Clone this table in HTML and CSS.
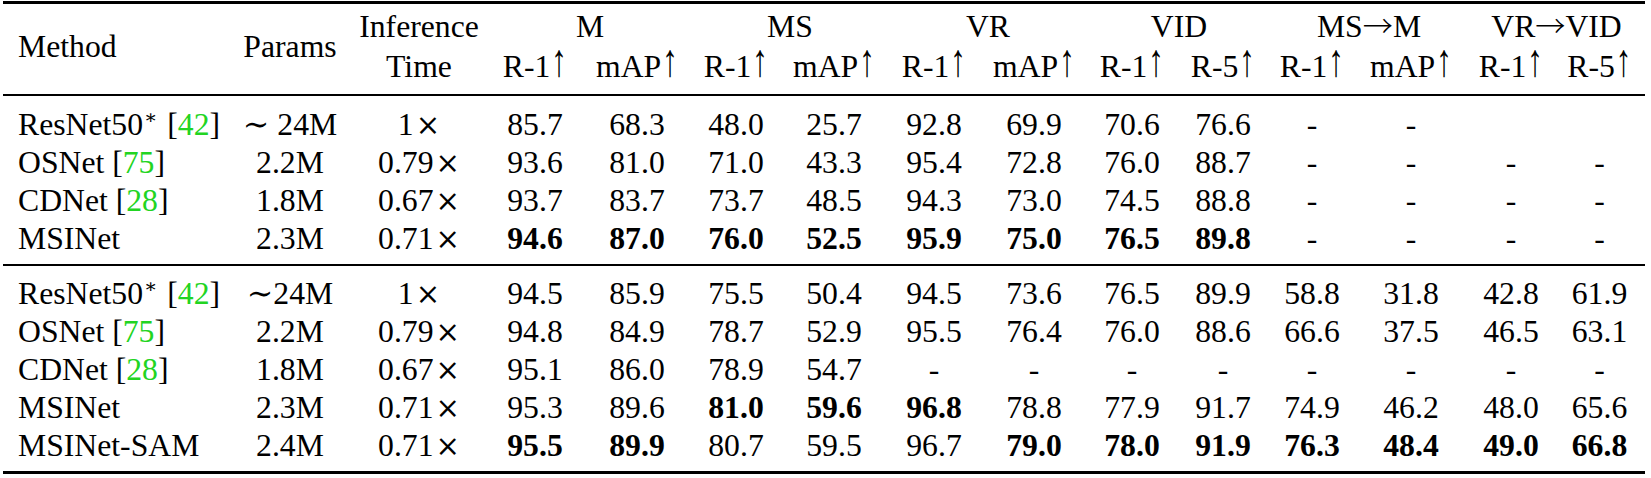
FILE: index.html
```html
<!DOCTYPE html>
<html>
<head>
<meta charset="utf-8">
<link rel="stylesheet" href="styles.css">
</head>
<body>
<div class="tbl">
  <div class="head">
    <div class="c first span2">Method</div>
    <div class="c span2">Params</div>
    <div class="c">Inference</div>
    <div class="c g2">M</div>
    <div class="c g2">MS</div>
    <div class="c g2">VR</div>
    <div class="c g2">VID</div>
    <div class="c g2">MS<span class="ra">→</span>M</div>
    <div class="c g2">VR<span class="ra">→</span>VID</div>
    <div class="c">Time</div>
    <div class="c">R-1<span class="up">↑</span></div><div class="c">mAP<span class="up">↑</span></div>
    <div class="c">R-1<span class="up">↑</span></div><div class="c">mAP<span class="up">↑</span></div>
    <div class="c">R-1<span class="up">↑</span></div><div class="c">mAP<span class="up">↑</span></div>
    <div class="c">R-1<span class="up">↑</span></div><div class="c">R-5<span class="up">↑</span></div>
    <div class="c">R-1<span class="up">↑</span></div><div class="c">mAP<span class="up">↑</span></div>
    <div class="c">R-1<span class="up">↑</span></div><div class="c">R-5<span class="up">↑</span></div>
  </div>
  <div class="block b1">
    <div class="c first">ResNet50<sup>∗</sup> [<span class="ref">42</span>]</div><div class="c">∼ 24M</div><div class="c">1<span class="x">×</span></div>
    <div class="c">85.7</div><div class="c">68.3</div><div class="c">48.0</div><div class="c">25.7</div><div class="c">92.8</div><div class="c">69.9</div><div class="c">70.6</div><div class="c">76.6</div><div class="c">-</div><div class="c">-</div><div class="c"></div><div class="c"></div>

    <div class="c first">OSNet [<span class="ref">75</span>]</div><div class="c">2.2M</div><div class="c">0.79<span class="x">×</span></div>
    <div class="c">93.6</div><div class="c">81.0</div><div class="c">71.0</div><div class="c">43.3</div><div class="c">95.4</div><div class="c">72.8</div><div class="c">76.0</div><div class="c">88.7</div><div class="c">-</div><div class="c">-</div><div class="c">-</div><div class="c">-</div>

    <div class="c first">CDNet [<span class="ref">28</span>]</div><div class="c">1.8M</div><div class="c">0.67<span class="x">×</span></div>
    <div class="c">93.7</div><div class="c">83.7</div><div class="c">73.7</div><div class="c">48.5</div><div class="c">94.3</div><div class="c">73.0</div><div class="c">74.5</div><div class="c">88.8</div><div class="c">-</div><div class="c">-</div><div class="c">-</div><div class="c">-</div>

    <div class="c first">MSINet</div><div class="c">2.3M</div><div class="c">0.71<span class="x">×</span></div>
    <div class="c b">94.6</div><div class="c b">87.0</div><div class="c b">76.0</div><div class="c b">52.5</div><div class="c b">95.9</div><div class="c b">75.0</div><div class="c b">76.5</div><div class="c b">89.8</div><div class="c">-</div><div class="c">-</div><div class="c">-</div><div class="c">-</div>
  </div>
  <div class="block b2">
    <div class="c first">ResNet50<sup>∗</sup> [<span class="ref">42</span>]</div><div class="c">∼24M</div><div class="c">1<span class="x">×</span></div>
    <div class="c">94.5</div><div class="c">85.9</div><div class="c">75.5</div><div class="c">50.4</div><div class="c">94.5</div><div class="c">73.6</div><div class="c">76.5</div><div class="c">89.9</div><div class="c">58.8</div><div class="c">31.8</div><div class="c">42.8</div><div class="c">61.9</div>

    <div class="c first">OSNet [<span class="ref">75</span>]</div><div class="c">2.2M</div><div class="c">0.79<span class="x">×</span></div>
    <div class="c">94.8</div><div class="c">84.9</div><div class="c">78.7</div><div class="c">52.9</div><div class="c">95.5</div><div class="c">76.4</div><div class="c">76.0</div><div class="c">88.6</div><div class="c">66.6</div><div class="c">37.5</div><div class="c">46.5</div><div class="c">63.1</div>

    <div class="c first">CDNet [<span class="ref">28</span>]</div><div class="c">1.8M</div><div class="c">0.67<span class="x">×</span></div>
    <div class="c">95.1</div><div class="c">86.0</div><div class="c">78.9</div><div class="c">54.7</div><div class="c">-</div><div class="c">-</div><div class="c">-</div><div class="c">-</div><div class="c">-</div><div class="c">-</div><div class="c">-</div><div class="c">-</div>

    <div class="c first">MSINet</div><div class="c">2.3M</div><div class="c">0.71<span class="x">×</span></div>
    <div class="c">95.3</div><div class="c">89.6</div><div class="c b">81.0</div><div class="c b">59.6</div><div class="c b">96.8</div><div class="c">78.8</div><div class="c">77.9</div><div class="c">91.7</div><div class="c">74.9</div><div class="c">46.2</div><div class="c">48.0</div><div class="c">65.6</div>

    <div class="c first">MSINet-SAM</div><div class="c">2.4M</div><div class="c">0.71<span class="x">×</span></div>
    <div class="c b">95.5</div><div class="c b">89.9</div><div class="c">80.7</div><div class="c">59.5</div><div class="c">96.7</div><div class="c b">79.0</div><div class="c b">78.0</div><div class="c b">91.9</div><div class="c b">76.3</div><div class="c b">48.4</div><div class="c b">49.0</div><div class="c b">66.8</div>
  </div>
</div>
</body>
</html>
```
FILE: styles.css
```css
html, body {
  margin: 0;
  padding: 0;
  background: #ffffff;
}
body {
  padding: 1px 0 0 3px;
  font-family: "Liberation Serif", "Times New Roman", "DejaVu Serif", serif;
  font-size: 31.7px;
  color: #000000;
}
.tbl {
  width: 1642px;
  border-top: 3px solid #000;
  border-bottom: 3px solid #000;
}
.head, .block {
  display: grid;
  grid-template-columns: 227px 120px 138px 94px 110px 88px 108px 92px 108px 88px 94px 84px 114px 86px 91px;
  grid-auto-rows: 38px;
}
.head {
  grid-template-rows: 40px 38px;
  padding: 4px 0 8px;
  border-bottom: 2px solid #000;
}
.b1 {
  padding: 10px 0 6px;
  border-bottom: 2px solid #000;
}
.b2 {
  padding: 9px 0 6px;
}
.c {
  line-height: 38px;
  text-align: center;
  white-space: nowrap;
}
.first {
  text-align: left;
  padding-left: 15px;
}
.span2 {
  grid-row: span 2;
  align-self: center;
}
.g2 {
  grid-column: span 2;
}
.b {
  font-weight: bold;
}
.ref {
  color: #22d422;
}
sup {
  font-size: 0.62em;
  line-height: 0;
  vertical-align: 0.55em;
  margin-left: 1px;
  margin-right: 2px;
}
.up {
  display: inline-block;
  line-height: 0.7em;
  transform: scale(1, 1.45);
  transform-origin: 50% 100%;
  margin-left: 1px;
}
.ra {
  font-family: "Noto Sans CJK SC", "DejaVu Sans", sans-serif;
  font-size: 0.95em;
  font-weight: 300;
  line-height: 1;
}
.x {
  font-family: "DejaVu Serif", serif;
  font-size: 0.92em;
  margin-left: 2px;
  line-height: 1;
}
```
